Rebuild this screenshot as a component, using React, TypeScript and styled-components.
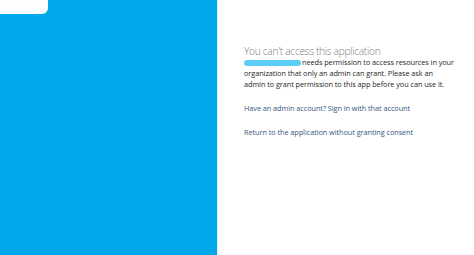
import React from "react";
import styled, { createGlobalStyle } from "styled-components";

const GlobalStyle = createGlobalStyle`
  html, body {
    margin: 0;
    padding: 0;
    background: #ffffff;
  }
  body {
    font-family: "Open Sans", "Noto Sans", sans-serif;
  }
`;

const Page = styled.div`
  display: flex;
  width: 474px;
  height: 255px;
  overflow: hidden;
  background: #ffffff;
`;

const SidePanel = styled.div`
  width: 217px;
  flex-shrink: 0;
  background: #00aaea;
  border-right: 1px solid #d9eef7;
  display: flex;
  flex-direction: column;
`;

const Tab = styled.div`
  width: 48px;
  height: 14px;
  background: #fbfdfe;
  border-bottom-right-radius: 6px;
`;

const Content = styled.div`
  flex: 1;
  padding: 46px 0 0 26px;
  display: flex;
  flex-direction: column;
`;

const Title = styled.h1`
  margin: 0;
  font-size: 10.2px;
  font-weight: 300;
  color: #7b7b7b;
  line-height: 11px;
  letter-spacing: -0.3px;
`;

const Body = styled.p`
  margin: 0;
  font-size: 7.3px;
  line-height: 11px;
  color: #262626;
  letter-spacing: -0.05px;
  white-space: nowrap;
`;

const Redacted = styled.span`
  display: inline-block;
  width: 57px;
  height: 6px;
  margin-right: 1px;
  vertical-align: -1px;
  border-radius: 3px;
  background: #5ccdf4;
`;

const LinkText = styled.a<{ $gap: number }>`
  display: block;
  margin-top: ${({ $gap }) => $gap}px;
  font-size: 7.3px;
  line-height: 11px;
  color: #35577a;
  text-decoration: none;
  letter-spacing: -0.05px;
`;

export default function App() {
  return (
    <Page>
      <GlobalStyle />
      <SidePanel>
        <Tab />
      </SidePanel>
      <Content>
        <Title>You can't access this application</Title>
        <Body>
          <Redacted />
          needs permission to access resources in your
          <br />
          organization that only an admin can grant. Please ask an
          <br />
          admin to grant permission to this app before you can use it.
        </Body>
        <LinkText $gap={13}>Have an admin account? Sign in with that account</LinkText>
        <LinkText $gap={13}>Return to the application without granting consent</LinkText>
      </Content>
    </Page>
  );
}
